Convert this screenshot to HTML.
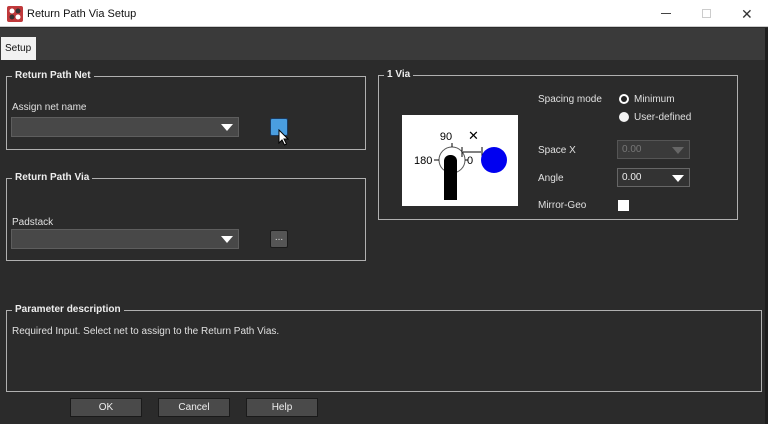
<!DOCTYPE html>
<html><head><meta charset="utf-8"><style>
*{box-sizing:border-box;margin:0;padding:0}
body{width:768px;height:424px;overflow:hidden;background:#2b2b2b;font-family:"Liberation Sans",sans-serif;font-size:10px;color:#e0e0e0;position:relative}
.a{position:absolute}
.grp{position:absolute;border:1px solid #b0b0b0}
.lg{position:absolute;top:-7px;left:5px;background:#2b2b2b;padding:0 3px;font-weight:bold;font-size:10px;color:#eee}
.dd{position:absolute;background:#484848;border:1px solid #5e5e5e}
.tri{position:absolute;width:0;height:0;border-left:6px solid transparent;border-right:6px solid transparent;border-top:7px solid #fff}
.btn{position:absolute;top:398px;width:72px;height:19px;background:#4a4a4a;border:1px solid #1a1a1a;color:#eee;text-align:center;line-height:17px;font-size:10px}
</style></head><body>
<div class="a" style="left:0;top:0;width:768px;height:27px;background:#fff;border-bottom:1px solid #ccc"></div>
<svg class="a" style="left:7px;top:6px" width="16" height="16" viewBox="0 0 16 16"><rect width="16" height="16" rx="2" fill="#c0393b"/><circle cx="5" cy="5" r="2.5" fill="#fff"/><circle cx="11" cy="5" r="2.5" fill="#333"/><circle cx="5" cy="11" r="2.5" fill="#333"/><circle cx="11" cy="11" r="2.5" fill="#fff"/></svg>
<div class="a" style="left:27px;top:8px;color:#111;font-size:11px">Return Path Via Setup</div>
<div class="a" style="left:661px;top:13px;width:10px;height:1px;background:#444"></div>
<div class="a" style="left:702px;top:9px;width:9px;height:9px;border:1px solid #ccc"></div>
<div class="a" style="left:741px;top:6px;color:#333;font-size:14px">✕</div>
<div class="a" style="left:0;top:28px;width:768px;height:32px;background:#3a3a3a"></div>
<div class="a" style="left:1px;top:37px;width:35px;height:23px;background:#f2f2f2;color:#111;font-size:10px;line-height:23px;padding-left:4px">Setup</div>
<div class="a" style="left:765px;top:28px;width:3px;height:396px;background:#1e1e1e"></div>

<div class="grp" style="left:6px;top:76px;width:360px;height:74px"><div class="lg">Return Path Net</div></div>
<div class="a" style="left:12px;top:102px">Assign net name</div>
<div class="dd" style="left:11px;top:117px;width:228px;height:20px"><div class="tri" style="right:5px;top:6px"></div></div>
<div class="a" style="left:270px;top:118px;width:18px;height:18px;background:#4a9ee0;border:1px solid #1a3a60;border-radius:2px"></div>
<svg class="a" style="left:278px;top:129px" width="12" height="18" viewBox="0 0 12 18"><path d="M1 1 L1 14 L4 11 L6.5 16 L8.5 15 L6 10 L10 10 Z" fill="#fff" stroke="#000" stroke-width="1"/></svg>

<div class="grp" style="left:6px;top:178px;width:360px;height:83px"><div class="lg">Return Path Via</div></div>
<div class="a" style="left:12px;top:217px">Padstack</div>
<div class="dd" style="left:11px;top:229px;width:228px;height:20px"><div class="tri" style="right:5px;top:6px"></div></div>
<div class="a" style="left:270px;top:230px;width:18px;height:18px;background:#555;border:1px solid #1a1a1a;border-radius:2px;text-align:center;line-height:14px;color:#ddd">...</div>

<div class="grp" style="left:378px;top:75px;width:360px;height:145px"><div class="lg">1 Via</div></div>
<div class="a" style="left:402px;top:115px;width:116px;height:91px;background:#fff"></div>
<svg class="a" style="left:402px;top:115px" width="116" height="91" viewBox="0 0 116 91" font-family="Liberation Sans" font-size="11">
<circle cx="50" cy="45" r="13" fill="none" stroke="#555" stroke-width="1"/>
<rect x="42" y="40" width="13" height="45" rx="6" fill="#000"/>
<rect x="42" y="47" width="13" height="38" fill="#000"/>
<text x="44" y="25" text-anchor="middle" fill="#000">90</text>
<line x1="50" y1="28" x2="50" y2="32" stroke="#000"/>
<text x="12" y="49" fill="#000">180</text>
<line x1="32" y1="45" x2="37" y2="45" stroke="#000"/>
<line x1="63" y1="45" x2="66" y2="45" stroke="#000"/>
<text x="65" y="49" fill="#000">0</text>
<text x="66" y="25" font-size="13" fill="#000">✕</text>
<line x1="60" y1="32" x2="60" y2="42" stroke="#000"/><line x1="80" y1="32" x2="80" y2="42" stroke="#000"/>
<line x1="61" y1="37" x2="79" y2="37" stroke="#000"/>
<circle cx="92" cy="45" r="13" fill="#0000f0"/>
</svg>
<div class="a" style="left:538px;top:94px">Spacing mode</div>
<div class="a" style="left:619px;top:94px;width:10px;height:10px;border-radius:50%;background:#fff;border:3px solid #fff;box-shadow:inset 0 0 0 1px #333"></div>
<div class="a" style="left:621px;top:96px;width:6px;height:6px;border-radius:50%;background:#222"></div>
<div class="a" style="left:634px;top:94px">Minimum</div>
<div class="a" style="left:619px;top:112px;width:10px;height:10px;border-radius:50%;background:#f4f4f4"></div>
<div class="a" style="left:634px;top:112px">User-defined</div>
<div class="a" style="left:538px;top:145px">Space X</div>
<div class="dd" style="left:617px;top:140px;width:73px;height:19px;background:#3a3a3a;border-color:#555;color:#777;padding:3px 4px">0.00<div class="tri" style="right:5px;top:6px;border-top-color:#666"></div></div>
<div class="a" style="left:538px;top:173px">Angle</div>
<div class="dd" style="left:617px;top:168px;width:73px;height:19px;background:#333;border-color:#666;color:#eee;padding:3px 4px">0.00<div class="tri" style="right:5px;top:6px"></div></div>
<div class="a" style="left:538px;top:200px">Mirror-Geo</div>
<div class="a" style="left:618px;top:200px;width:11px;height:11px;background:#fff"></div>

<div class="grp" style="left:6px;top:310px;width:756px;height:82px"><div class="lg">Parameter description</div></div>
<div class="a" style="left:12px;top:326px">Required Input. Select net to assign to the Return Path Vias.</div>

<div class="btn" style="left:70px">OK</div>
<div class="btn" style="left:158px">Cancel</div>
<div class="btn" style="left:246px">Help</div>
</body></html>
